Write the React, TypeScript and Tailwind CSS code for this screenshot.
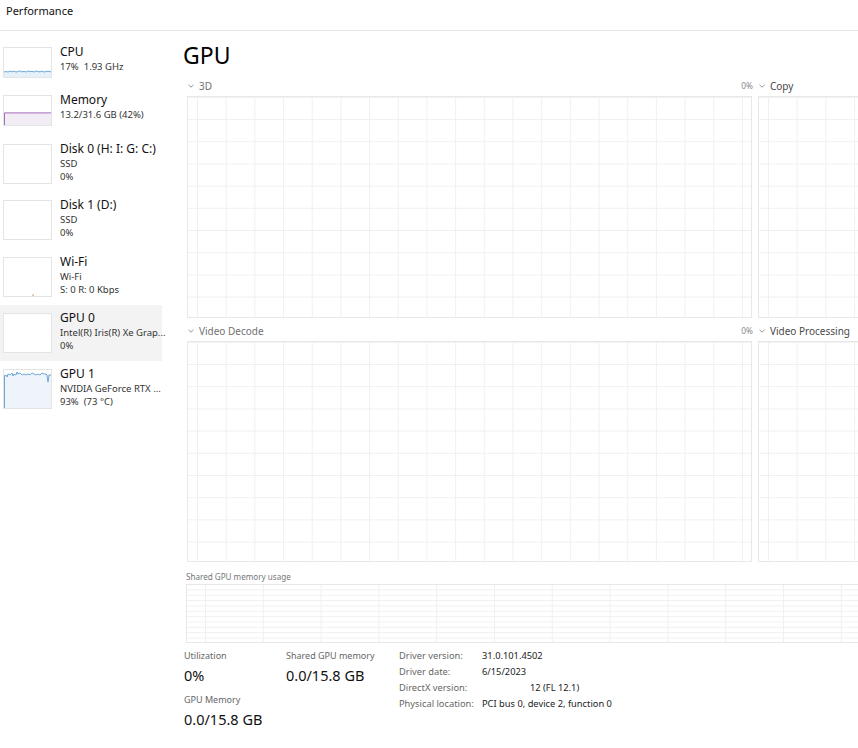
import React from "react";

const cpuLine =
  "0,24 2,23.5 4,24 6,23 8,23.8 10,23.2 12,24 14,23.6 16,22.8 18,23.9 20,23.4 22,24 24,23 26,23.7 28,23.3 30,24 32,22.9 34,23.6 36,23.8 38,23.1 40,24 42,23.5 44,23.2 47,23.8";
const gpu1Line =
  "0,6 2,5 3,7 4,4 6,5 8,3 9,6 10,4 12,5 13,2 14,4 16,3 18,5 20,4 22,5 24,4 26,5 28,3 30,4 32,5 34,4 36,5 38,3 40,4 42,4 43,5 44,12 45,5 47,5";

const CpuGraph = () => (
  <svg viewBox="0 0 47 29" preserveAspectRatio="none" className="h-full w-full">
    <polygon points={cpuLine + " 47,29 0,29"} fill="#e6f0f8" />
    <polyline points={cpuLine} fill="none" stroke="#4b93cf" strokeWidth="0.8" />
  </svg>
);

const MemGraph = () => (
  <svg viewBox="0 0 47 30" preserveAspectRatio="none" className="h-full w-full">
    <rect x="0" y="17" width="47" height="13" fill="#f2ecf5" />
    <path d="M0.5 30V17.5H47" fill="none" stroke="#a26bbb" strokeWidth="1" />
  </svg>
);

const WifiGraph = () => (
  <svg viewBox="0 0 47 38" preserveAspectRatio="none" className="h-full w-full">
    <rect x="28.5" y="36.5" width="1.2" height="1.2" fill="#b0703a" />
  </svg>
);

const Gpu1Graph = () => (
  <svg viewBox="0 0 47 38" preserveAspectRatio="none" className="h-full w-full">
    <polygon points={gpu1Line + " 47,38 0,38"} fill="#eef4fa" />
    <polyline points={gpu1Line} fill="none" stroke="#4b93cf" strokeWidth="0.8" />
    <line x1="0.5" y1="6" x2="0.5" y2="38" stroke="#4b93cf" strokeWidth="0.8" />
  </svg>
);

type Item = {
  title: string;
  lines: string[];
  h: string;
  short?: boolean;
  selected?: boolean;
  graph?: React.ReactNode;
};

const items: Item[] = [
  { title: "CPU", lines: ["17%  1.93 GHz"], h: "h-[48px]", short: true, graph: <CpuGraph /> },
  { title: "Memory", lines: ["13.2/31.6 GB (42%)"], h: "h-[49px]", short: true, graph: <MemGraph /> },
  { title: "Disk 0 (H: I: G: C:)", lines: ["SSD", "0%"], h: "h-[56px]" },
  { title: "Disk 1 (D:)", lines: ["SSD", "0%"], h: "h-[57px]" },
  { title: "Wi-Fi", lines: ["Wi-Fi", "S: 0 R: 0 Kbps"], h: "h-[56px]", graph: <WifiGraph /> },
  { title: "GPU 0", lines: ["Intel(R) Iris(R) Xe Grap...", "0%"], h: "h-[56px]", selected: true },
  { title: "GPU 1", lines: ["NVIDIA GeForce RTX ...", "93%  (73 °C)"], h: "h-[56px]", graph: <Gpu1Graph /> },
];

const SideItem = ({ item }: { item: Item }) => (
  <div className={`flex gap-[8px] pl-[3px] pt-[4px] ${item.h} ${item.selected ? "bg-[#f3f3f3]" : ""}`}>
    <div
      className={`mt-[4px] w-[49px] shrink-0 border border-[#e4e4e4] bg-white ${
        item.short ? "h-[31px]" : "h-[40px]"
      }`}
    >
      {item.graph}
    </div>
    <div className="flex min-w-0 flex-col">
      <div className="text-[12px] leading-[17px] whitespace-nowrap text-[#111]">{item.title}</div>
      {item.lines.map((l) => (
        <div key={l} className="text-[9.5px] leading-[13px] whitespace-pre text-[#333]">
          {l}
        </div>
      ))}
    </div>
  </div>
);

const Grid = ({ id, cw, ch, ox, oy }: { id: string; cw: number; ch: number; ox: number; oy: number }) => (
  <svg className="absolute inset-0 h-full w-full">
    <defs>
      <pattern id={id} x={ox} y={oy} width={cw} height={ch} patternUnits="userSpaceOnUse">
        <rect width="1" height={ch} fill="#f0f0f0" />
        <rect width={cw} height="1" fill="#f0f0f0" />
      </pattern>
    </defs>
    <rect width="100%" height="100%" fill={`url(#${id})`} />
  </svg>
);

const Chevron = () => (
  <svg width="6" height="4" viewBox="0 0 6 4" className="shrink-0">
    <polyline points="0.5,0.8 3,3.2 5.5,0.8" fill="none" stroke="#8a8a8a" strokeWidth="0.9" />
  </svg>
);

const Engine = ({
  id,
  name,
  pct,
  dark,
  h,
}: {
  id: string;
  name: string;
  pct?: boolean;
  dark?: boolean;
  h: string;
}) => (
  <div className="flex w-[565px] shrink-0 flex-col">
    <div className="flex h-[14px] items-center justify-between pl-[1px]">
      <div className="flex items-center gap-[5px]">
        <Chevron />
        <span className={`text-[10px] leading-[14px] ${dark ? "text-[#4a4a4a]" : "text-[#707070]"}`}>
          {name}
        </span>
      </div>
      {pct && <span className="mr-[-1px] text-[8.3px] text-[#8a8a8a]">0%</span>}
    </div>
    <div className={`relative mt-[3px] border border-[#e8e8e8] ${h}`}>
      <Grid id={id} cw={28.68} ch={22.2} ox={9} oy={22} />
    </div>
  </div>
);

const Stat = ({ label, value }: { label: string; value: string }) => (
  <div className="flex flex-col">
    <div className="text-[9px] leading-[12px] text-[#666]">{label}</div>
    <div className="mt-[4px] text-[14.5px] leading-[18px] text-[#111]">{value}</div>
  </div>
);

const driver: [string, string, string?][] = [
  ["Driver version:", "31.0.101.4502"],
  ["Driver date:", "6/15/2023"],
  ["DirectX version:", "12 (FL 12.1)", "pl-[48px]"],
  ["Physical location:", "PCI bus 0, device 2, function 0"],
];

export default function App() {
  return (
    <div className="h-[748px] w-[858px] overflow-hidden bg-white font-['Noto_Sans',sans-serif]">
      <div className="h-[31px] border-b border-[#e6e6e6] pl-[6px] pt-[3px] text-[11px] leading-[15px] text-[#111]">
        Performance
      </div>
      <div className="flex">
        <div className="w-[162px] shrink-0 pt-[8px]">
          {items.map((it) => (
            <SideItem key={it.title} item={it} />
          ))}
        </div>
        <div className="min-w-0 flex-1 pl-[21px] pt-[10px]">
          <div className="text-[23px] leading-[28px] text-black">GPU</div>
          <div className="ml-[4px] mt-[10px] flex gap-[6px]">
            <Engine id="g3d" name="3D" pct h="h-[222px]" />
            <Engine id="gcopy" name="Copy" dark h="h-[222px]" />
          </div>
          <div className="ml-[4px] mt-[6px] flex gap-[6px]">
            <Engine id="gvd" name="Video Decode" pct h="h-[221px]" />
            <Engine id="gvp" name="Video Processing" dark h="h-[221px]" />
          </div>
          <div className="ml-[3px] mt-[9px] text-[8.1px] leading-[12px] text-[#777]">Shared GPU memory usage</div>
          <div className="relative ml-[3px] mt-[1px] h-[59px] w-[1136px] border border-[#e8e8e8]">
            <Grid id="gshared" cw={57.8} ch={5.35} ox={18} oy={4.4} />
          </div>
          <div className="ml-[1px] mt-[5px] flex">
            <div className="flex w-[102px] shrink-0 flex-col gap-[10px] pt-[1.5px]">
              <Stat label="Utilization" value="0%" />
              <Stat label="GPU Memory" value="0.0/15.8 GB" />
            </div>
            <div className="w-[113px] shrink-0 pt-[1.5px]">
              <Stat label="Shared GPU memory" value="0.0/15.8 GB" />
            </div>
            <div className="flex flex-col">
              {driver.map(([k, v, pad]) => (
                <div key={k} className="flex text-[9.3px] leading-[16px]">
                  <span className="w-[83px] shrink-0 text-[#666]">{k}</span>
                  <span className={`whitespace-nowrap text-[#222] ${pad ?? ""}`}>{v}</span>
                </div>
              ))}
            </div>
          </div>
        </div>
      </div>
    </div>
  );
}
